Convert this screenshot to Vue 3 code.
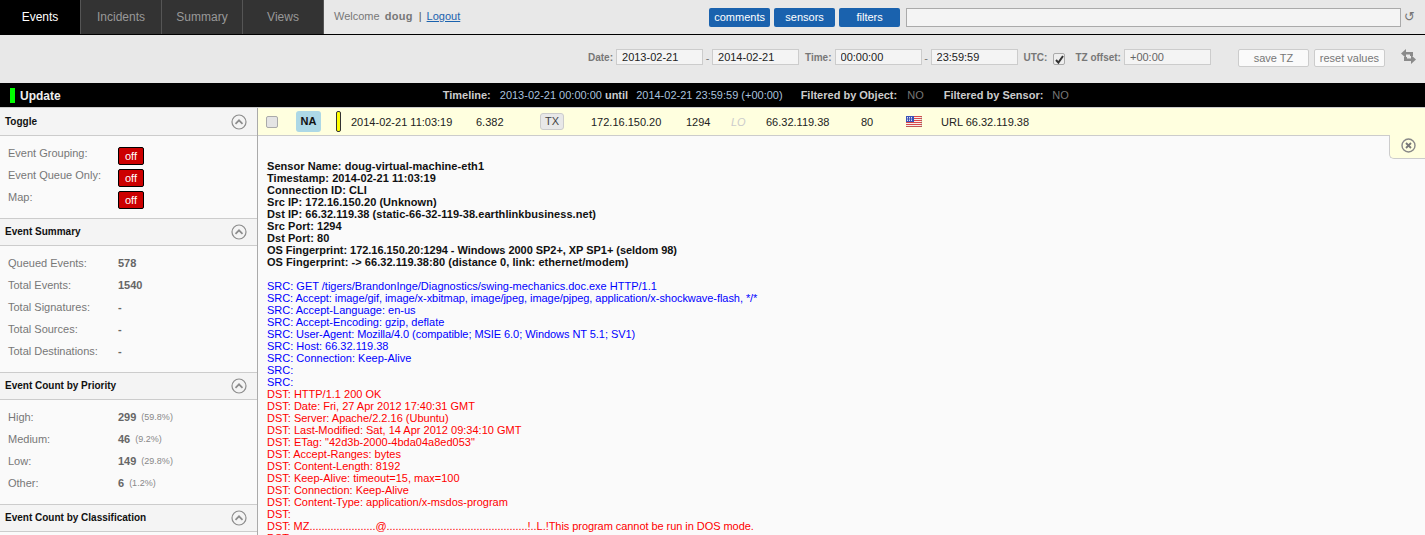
<script setup>
const tabs = ["Events", "Incidents", "Summary", "Views"];

const summary = [
  { label: "Queued Events:", value: "578" },
  { label: "Total Events:", value: "1540" },
  { label: "Total Signatures:", value: "-" },
  { label: "Total Sources:", value: "-" },
  { label: "Total Destinations:", value: "-" },
];

const priority = [
  { label: "High:", value: "299", pct: "(59.8%)" },
  { label: "Medium:", value: "46", pct: "(9.2%)" },
  { label: "Low:", value: "149", pct: "(29.8%)" },
  { label: "Other:", value: "6", pct: "(1.2%)" },
];

const toggles = ["Event Grouping:", "Event Queue Only:", "Map:"];

const info = [
  "Sensor Name: doug-virtual-machine-eth1",
  "Timestamp: 2014-02-21 11:03:19",
  "Connection ID: CLI",
  "Src IP: 172.16.150.20 (Unknown)",
  "Dst IP: 66.32.119.38 (static-66-32-119-38.earthlinkbusiness.net)",
  "Src Port: 1294",
  "Dst Port: 80",
  "OS Fingerprint: 172.16.150.20:1294 - Windows 2000 SP2+, XP SP1+ (seldom 98)",
  "OS Fingerprint: -> 66.32.119.38:80 (distance 0, link: ethernet/modem)",
];

const src = [
  "SRC: GET /tigers/BrandonInge/Diagnostics/swing-mechanics.doc.exe HTTP/1.1",
  "SRC: Accept: image/gif, image/x-xbitmap, image/jpeg, image/pjpeg, application/x-shockwave-flash, */*",
  "SRC: Accept-Language: en-us",
  "SRC: Accept-Encoding: gzip, deflate",
  "SRC: User-Agent: Mozilla/4.0 (compatible; MSIE 6.0; Windows NT 5.1; SV1)",
  "SRC: Host: 66.32.119.38",
  "SRC: Connection: Keep-Alive",
  "SRC:",
  "SRC:",
];

const dst = [
  "DST: HTTP/1.1 200 OK",
  "DST: Date: Fri, 27 Apr 2012 17:40:31 GMT",
  "DST: Server: Apache/2.2.16 (Ubuntu)",
  "DST: Last-Modified: Sat, 14 Apr 2012 09:34:10 GMT",
  'DST: ETag: "42d3b-2000-4bda04a8ed053"',
  "DST: Accept-Ranges: bytes",
  "DST: Content-Length: 8192",
  "DST: Keep-Alive: timeout=15, max=100",
  "DST: Connection: Keep-Alive",
  "DST: Content-Type: application/x-msdos-program",
  "DST:",
  "DST: MZ......................@...............................................!..L.!This program cannot be run in DOS mode.",
  "DST:",
];
</script>

<template>
  <div class="page">
    <header class="topbar">
      <nav class="tabs">
        <div v-for="(t, i) in tabs" :key="t" class="tab" :class="{ active: i === 0 }">{{ t }}</div>
      </nav>
      <div class="welcome">
        <span>Welcome</span>
        <b>doug</b>
        <span class="sep">|</span>
        <a href="#">Logout</a>
      </div>
      <div class="top-actions">
        <button class="blue">comments</button>
        <button class="blue">sensors</button>
        <button class="blue">filters</button>
        <input class="search" type="text" />
        <span class="reload">↺</span>
      </div>
    </header>

    <div class="datebar">
      <label>Date:</label>
      <input class="field" value="2013-02-21" />
      <span class="dash">-</span>
      <input class="field" value="2014-02-21" />
      <label class="gap-l">Time:</label>
      <input class="field" value="00:00:00" />
      <span class="dash">-</span>
      <input class="field" value="23:59:59" />
      <label class="gap-l">UTC:</label>
      <span class="check">
        <svg width="9" height="9" viewBox="0 0 9 9"><path d="M1 5l2.400 2.600L8 1" fill="none" stroke="#333" stroke-width="2" /></svg>
      </span>
      <label class="tz-label">TZ offset:</label>
      <input class="field tz" value="+00:00" />
      <button class="plain save">save TZ</button>
      <button class="plain">reset values</button>
      <svg class="swap" width="15" height="15" viewBox="0 0 15 15">
        <path d="M0 4.500L5 0v3h7v4H9V5.500H5V9z" fill="#8a8a8a" />
        <path d="M15 10.500L10 15v-3H3V8h3v1.500h4V6z" fill="#8a8a8a" />
      </svg>
    </div>

    <div class="statusbar">
      <div class="update"><i></i>Update</div>
      <div class="status-info">
        <b>Timeline:</b>
        <span class="stamp s1">2013-02-21 00:00:00</span>
        <b class="until">until</b>
        <span class="stamp s2">2014-02-21 23:59:59 (+00:00)</span>
        <b class="f1">Filtered by Object:</b>
        <span class="no no1">NO</span>
        <b class="f2">Filtered by Sensor:</b>
        <span class="no">NO</span>
      </div>
    </div>

    <div class="body">
      <aside class="sidebar">
        <section>
          <h3>Toggle<svg class="chev" width="16" height="16" viewBox="0 0 16 16"><circle cx="8" cy="8" r="7" fill="none" stroke="#8c8c8c" stroke-width="1.200" /><path d="M4.500 9.800L8 6.300l3.500 3.500" fill="none" stroke="#8c8c8c" stroke-width="1.700" /></svg></h3>
          <div class="rows">
            <div v-for="t in toggles" :key="t" class="row">
              <span class="key">{{ t }}</span>
              <span class="off">off</span>
            </div>
          </div>
        </section>
        <section>
          <h3>Event Summary<svg class="chev" width="16" height="16" viewBox="0 0 16 16"><circle cx="8" cy="8" r="7" fill="none" stroke="#8c8c8c" stroke-width="1.200" /><path d="M4.500 9.800L8 6.300l3.500 3.500" fill="none" stroke="#8c8c8c" stroke-width="1.700" /></svg></h3>
          <div class="rows">
            <div v-for="s in summary" :key="s.label" class="row">
              <span class="key">{{ s.label }}</span>
              <b class="val">{{ s.value }}</b>
            </div>
          </div>
        </section>
        <section>
          <h3>Event Count by Priority<svg class="chev" width="16" height="16" viewBox="0 0 16 16"><circle cx="8" cy="8" r="7" fill="none" stroke="#8c8c8c" stroke-width="1.200" /><path d="M4.500 9.800L8 6.300l3.500 3.500" fill="none" stroke="#8c8c8c" stroke-width="1.700" /></svg></h3>
          <div class="rows">
            <div v-for="p in priority" :key="p.label" class="row">
              <span class="key">{{ p.label }}</span>
              <b class="val">{{ p.value }}</b>
              <span class="pct">{{ p.pct }}</span>
            </div>
          </div>
        </section>
        <section>
          <h3>Event Count by Classification<svg class="chev" width="16" height="16" viewBox="0 0 16 16"><circle cx="8" cy="8" r="7" fill="none" stroke="#8c8c8c" stroke-width="1.200" /><path d="M4.500 9.800L8 6.300l3.500 3.500" fill="none" stroke="#8c8c8c" stroke-width="1.700" /></svg></h3>
        </section>
      </aside>

      <main class="main">
        <div class="event">
          <span class="box"></span>
          <span class="na">NA</span>
          <span class="pri"></span>
          <span>2014-02-21 11:03:19</span>
          <span>6.382</span>
          <span class="proto">TX</span>
          <span>172.16.150.20</span>
          <span>1294</span>
          <span class="lo">LO</span>
          <span>66.32.119.38</span>
          <span>80</span>
          <svg width="16" height="11" viewBox="0 0 16 11">
            <rect width="16" height="11" fill="#d9484a" />
            <path d="M0 1.500h16M0 3.500h16M0 5.500h16M0 7.500h16M0 9.500h16" stroke="#f6efe8" stroke-width="1" />
            <rect width="8" height="6" fill="#3a52b8" />
            <path d="M1 1.500h6M1 3h6M1 4.500h6" stroke="#dde" stroke-dasharray="1 1" />
            <path d="M16 0v11H0" fill="none" stroke="#8a7a70" stroke-width="1" opacity="0.6" />
          </svg>
          <span>URL 66.32.119.38</span>
        </div>
        <div class="detail">
          <div class="close-tab">
            <svg width="15" height="15" viewBox="0 0 15 15">
              <circle cx="7.500" cy="7.500" r="6.500" fill="none" stroke="#888" stroke-width="1.400" />
              <path d="M5 5l5 5M10 5l-5 5" stroke="#777" stroke-width="1.800" />
            </svg>
          </div>
          <div v-for="(l, i) in info" :key="l" class="info" :class="{ tight: i === 7 }">{{ l }}</div>
          <div class="spacer"></div>
          <div v-for="(l, i) in src" :key="'s' + i" class="src" :class="{ tight: i === 1 || i === 4 }">{{ l }}</div>
          <div v-for="(l, i) in dst" :key="'d' + i" class="dst" :class="{ tight: i === 11 }">{{ l }}</div>
        </div>
      </main>
    </div>
  </div>
</template>

<style scoped>
.page {
  width: 1425px;
  height: 535px;
  overflow: hidden;
  font-family: "Liberation Sans", Arial, sans-serif;
  font-size: 11px;
  background: #fafafa;
  display: flex;
  flex-direction: column;
}

.topbar {
  height: 35px;
  box-sizing: border-box;
  background: #e8e8e8;
  border-bottom: 1px solid #000;
  display: flex;
  align-items: stretch;
  flex: none;
}
.tabs {
  display: flex;
  width: 324px;
  flex: none;
}
.tab {
  width: 81px;
  background: #333;
  border-right: 1px solid #555;
  box-sizing: border-box;
  color: #999;
  font-size: 12px;
  line-height: 34px;
  text-align: center;
}
.tab.active {
  background: #000;
  color: #fff;
}
.welcome {
  margin-left: 10px;
  display: flex;
  gap: 3px;
  line-height: 32px;
  color: #777;
}
.welcome b {
  margin-left: 2px;
  letter-spacing: 0.3px;
}
.welcome .sep {
  margin: 0 2px 0 3px;
  color: #555;
}
.welcome a {
  color: #1a62ae;
  text-decoration: underline;
}
.top-actions {
  margin-left: auto;
  display: flex;
  align-items: flex-start;
  padding-top: 8px;
  gap: 4px;
  padding-right: 10px;
}
.blue {
  width: 61px;
  height: 19px;
  padding: 0 0 1px;
  border: 0;
  border-radius: 2px;
  background: #1a62ae;
  color: #fff;
  font: 11px "Liberation Sans", Arial, sans-serif;
}
.search {
  width: 495px;
  height: 19px;
  margin-left: 2px;
  box-sizing: border-box;
  background: #f4f4f4;
  border: 1px solid #aaa;
  padding: 0;
}
.reload {
  margin-left: -1px;
  color: #777;
  font: 13px/18px "DejaVu Sans", sans-serif;
}

.datebar {
  height: 48px;
  flex: none;
  box-sizing: border-box;
  background: #e8e8e8;
  display: flex;
  align-items: flex-start;
  padding: 14px 0 0 588px;
  color: #777;
  white-space: nowrap;
}
.datebar label {
  font-size: 10px;
  font-weight: bold;
  line-height: 17px;
  margin-right: 3px;
}
.field {
  width: 87px;
  height: 16px;
  flex: none;
  box-sizing: border-box;
  background: #f4f4f4;
  border: 1px solid #ccc;
  padding: 0 0 0 5px;
  color: #222;
  font: 11px "Liberation Sans", Arial, sans-serif;
}
.field.tz {
  color: #666;
}
.dash {
  width: 9px;
  text-align: center;
  line-height: 18px;
}
.gap-l {
  margin-left: 6px;
}
.check {
  width: 10px;
  height: 10px;
  flex: none;
  margin: 4px 0 0 3px;
  border: 1px solid #aaa;
  border-radius: 2px;
  background: #eee;
  display: flex;
  align-items: center;
  justify-content: center;
}
.tz-label {
  margin-left: 10px;
}
.plain {
  width: 71px;
  height: 18px;
  flex: none;
  padding: 0;
  margin-left: 5px;
  background: #fafafa;
  border: 1px solid #ccc;
  border-radius: 2px;
  color: #777;
  font: 11px "Liberation Sans", Arial, sans-serif;
}
.plain.save {
  margin-left: 27px;
}
.swap {
  flex: none;
  margin-left: 16px;
}

.statusbar {
  height: 25px;
  flex: none;
  background: #000;
  color: #ccc;
  display: flex;
  align-items: center;
  border-bottom: 1px solid #ccc;
  box-sizing: border-box;
}
.update {
  display: flex;
  align-items: center;
  margin: 1px 0 0 10px;
  font-size: 12px;
  font-weight: bold;
  color: #eee;
}
.update i {
  width: 5px;
  height: 15px;
  margin-right: 5px;
  background: #0f0;
}
.status-info {
  margin-left: 382px;
  white-space: nowrap;
  display: flex;
}
.stamp {
  color: #a9c2de;
}
.s1 {
  margin-left: 9px;
}
.until {
  margin-left: 3px;
}
.s2 {
  margin-left: 8px;
}
.f1 {
  margin-left: 18px;
}
.f2 {
  margin-left: 20px;
}
.no {
  margin-left: 9px;
  color: #777;
}
.no1 {
  margin-left: 10px;
}

.body {
  flex: 1;
  display: flex;
  min-height: 0;
}
.sidebar {
  width: 258px;
  flex: none;
  box-sizing: border-box;
  border-right: 1px solid #aaa;
  overflow: hidden;
}
.sidebar h3 {
  margin: 0;
  height: 28px;
  box-sizing: border-box;
  padding: 0 10px 0 5px;
  background: #f4f4f4;
  border-bottom: 1px solid #ccc;
  display: flex;
  align-items: center;
  justify-content: space-between;
  font-size: 10px;
  color: #111;
}
.sidebar section + section h3 {
  border-top: 1px solid #ccc;
  padding-bottom: 1px;
}
.rows {
  padding: 6px 0 10px 8px;
}
.row {
  height: 22px;
  display: flex;
  align-items: center;
  color: #777;
}
.key {
  width: 110px;
  flex: none;
}
.val {
  color: #666;
}
.pct {
  margin-left: 5px;
  font-size: 9px;
  color: #888;
}
.off {
  width: 26px;
  height: 18px;
  margin-top: 6px;
  flex: none;
  box-sizing: border-box;
  background: #c00;
  border: 1px solid #000;
  border-radius: 2px;
  color: #fff;
  line-height: 16px;
  text-align: center;
}

.main {
  flex: 1;
  min-width: 0;
}
.event {
  height: 28px;
  box-sizing: border-box;
  background: #ffffdf;
  border-bottom: 1px solid #ccc;
  display: grid;
  grid-template-columns: 30px 40px 15px 125px 64px 51px 95px 45px 35px 95px 45px 35px 1fr;
  align-items: center;
  padding-left: 8px;
  color: #222;
}
.box {
  width: 10px;
  height: 10px;
  border: 1px solid #aaa;
  border-radius: 2px;
  background: #e4e4e4;
}
.na {
  width: 25px;
  height: 21px;
  line-height: 21px;
  background: #add8e6;
  border-radius: 3px;
  text-align: center;
  font-weight: bold;
  color: #111;
}
.pri {
  width: 3px;
  height: 19px;
  background: #ff0;
  border: 1px solid #333;
  border-radius: 2px;
}
.proto {
  width: 22px;
  height: 15px;
  line-height: 15px;
  background: #e8e8e8;
  border: 1px solid #ccc;
  border-radius: 3px;
  text-align: center;
  color: #444;
}
.lo {
  color: #ccc;
  font-style: italic;
}
.detail {
  position: relative;
  padding: 24px 0 0 9px;
  line-height: 12px;
  white-space: pre;
}
.close-tab {
  position: absolute;
  top: -1px;
  right: 0;
  width: 36px;
  height: 24px;
  box-sizing: border-box;
  background: #ffffdf;
  border-left: 1px solid #ccc;
  border-bottom: 1px solid #ccc;
  border-bottom-left-radius: 5px;
  display: flex;
  align-items: center;
  justify-content: center;
  padding: 0 0 3px 2px;
}
.info {
  font-weight: bold;
  color: #111;
  letter-spacing: 0.05px;
}
.info.tight {
  letter-spacing: -0.04px;
}
.spacer {
  height: 12px;
}
.src {
  color: #00f;
}
.dst {
  color: #f00;
}
.src.tight,
.dst.tight {
  letter-spacing: -0.055px;
}
</style>

<style>
html,
body {
  margin: 0;
  overflow: hidden;
}
</style>
